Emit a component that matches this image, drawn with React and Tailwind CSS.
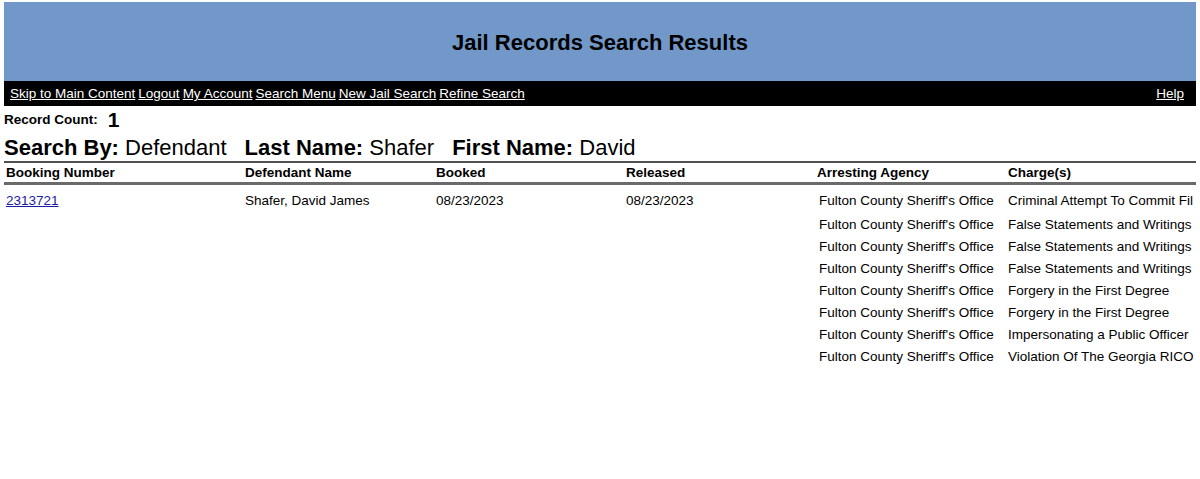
import React from 'react';

const navLinks = ['Skip to Main Content', 'Logout', 'My Account', 'Search Menu', 'New Jail Search', 'Refine Search'];

const charges = [
  'Criminal Attempt To Commit Fil',
  'False Statements and Writings',
  'False Statements and Writings',
  'False Statements and Writings',
  'Forgery in the First Degree',
  'Forgery in the First Degree',
  'Impersonating a Public Officer',
  'Violation Of The Georgia RICO',
];

const cols = 'grid grid-cols-[239px_191px_190px_191px_191px_190px]';

export default function App() {
  return (
    <div className="min-h-screen bg-white text-black pt-[2px] px-[4px] font-['Liberation_Sans',Arial,sans-serif] overflow-hidden">
      {/* Banner */}
      <div className="h-[79px] bg-[#7198c8] flex items-center justify-center pt-[2px]">
        <h1 className="text-[22px] font-bold text-black">Jail Records Search Results</h1>
      </div>

      {/* Nav bar */}
      <div className="h-[25px] bg-black flex items-center justify-between pl-[6px] pr-[12px] pt-[2px] text-[13.5px] text-white">
        <div className="flex gap-[3px]">
          {navLinks.map((l) => (
            <a key={l} href="#" className="underline">{l}</a>
          ))}
        </div>
        <a href="#" className="underline">Help</a>
      </div>

      {/* Record count */}
      <div className="flex items-center h-[27px] pt-[1px]">
        <span className="text-[13.5px] font-bold">Record Count:</span>
        <span className="text-[21px] font-bold ml-[10px]">1</span>
      </div>

      {/* Search criteria */}
      <div className="h-[28px] flex items-center text-[22px] gap-[18px]">
        <span><b>Search By:</b> Defendant</span>
        <span><b>Last Name:</b> Shafer</span>
        <span><b>First Name:</b> David</span>
      </div>

      {/* Table */}
      <div className="border-t-2 border-[#505050] w-[1192px] overflow-hidden">
        <div className={`${cols} h-[22px] items-center text-[13.5px] font-bold border-b-[3px] border-[#6a6a6a]`}>
          <div className="pl-[2px]">Booking Number</div>
          <div className="pl-[2px]">Defendant Name</div>
          <div className="pl-[2px]">Booked</div>
          <div className="pl-[2px]">Released</div>
          <div className="pl-[2px]">Arresting Agency</div>
          <div className="pl-[2px]">Charge(s)</div>
        </div>

        <div className={`${cols} text-[13.5px] pt-[6px]`}>
          <div className="pl-[2px] h-[16px]">
            <a href="#" className="underline text-[#1a1aa8]">2313721</a>
          </div>
          <div className="pl-[2px]">Shafer, David James</div>
          <div className="pl-[2px]">08/23/2023</div>
          <div className="pl-[2px]">08/23/2023</div>
          <div className="col-span-2 flex flex-col">
            {charges.map((c, i) => (
              <div key={i} className={`grid grid-cols-[191px_190px] h-[22px] ${i === 0 ? 'mb-[2px]' : ''}`}>
                <div className="pl-[4px] whitespace-nowrap">Fulton County Sheriff's Office</div>
                <div className="pl-[2px] whitespace-nowrap overflow-hidden">{c}</div>
              </div>
            ))}
          </div>
        </div>
      </div>
    </div>
  );
}
